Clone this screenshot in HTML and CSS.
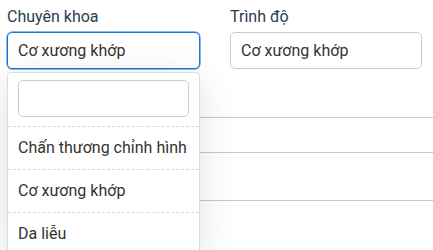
FILE: index.html
```html
<!DOCTYPE html>
<html lang="vi">
<head>
<meta charset="utf-8">
<link rel="stylesheet" href="styles.css">
</head>
<body>
<div class="page">
  <div class="form">
    <div class="field">
      <label class="label">Chuyên khoa</label>
      <div class="input focused">Cơ xương khớp</div>
      <div class="dropdown">
        <div class="search"><div class="search-input"></div></div>
        <ul class="options">
          <li class="option">Chấn thương chỉnh hình</li>
          <li class="option">Cơ xương khớp</li>
          <li class="option">Da liễu</li>
        </ul>
      </div>
    </div>
    <div class="field">
      <label class="label">Trình độ</label>
      <div class="input">Cơ xương khớp</div>
    </div>
  </div>
  <div class="rows">
    <div class="row r1"></div>
    <div class="row r2"></div>
    <div class="row r3"></div>
  </div>
</div>
</body>
</html>
```
FILE: styles.css
```css
* { box-sizing: border-box; }
html, body { margin: 0; padding: 0; background: #fff; }
body {
  font-family: Roboto, "Noto Sans", Arial, sans-serif;
  width: 433px;
  height: 250px;
  overflow: hidden;
}
.page { padding: 7px 0 0 7px; height: 250px; overflow: hidden; }
.form {
  display: grid;
  grid-template-columns: 193px 192px;
  column-gap: 30px;
}
.field { position: relative; }
.label {
  display: block;
  font-size: 16px;
  line-height: 20px;
  color: #2a3c4e;
  margin-bottom: 5px;
}
.input {
  height: 37px;
  border: 1px solid #cccccc;
  border-radius: 5px;
  padding: 0 10px;
  font-size: 16px;
  line-height: 35px;
  color: #333;
}
.input.focused {
  border-color: #1976d2;
  box-shadow: 0 0 0 0.5px #1976d2;
}
.dropdown {
  position: absolute;
  top: 65px;
  left: 0;
  width: 193px;
  height: 178px;
  overflow: hidden;
  background: #fff;
  border: 1px solid #dcdcdc;
  border-bottom: 0;
  border-radius: 4px 4px 0 0;
  box-shadow: 0 8px 36px rgba(0, 0, 0, 0.13);
  z-index: 2;
}
.search { padding: 7px 10px 9px 10px; }
.search-input {
  height: 37px;
  border: 1px solid #cccccc;
  border-radius: 5px;
}
.options { list-style: none; margin: 0; padding: 0; }
.option {
  border-top: 1px dashed #d9d9d9;
  height: 43px;
  padding: 0 10px;
  font-size: 16px;
  line-height: 41px;
  color: #333;
  white-space: nowrap;
}
.rows { margin: 0; }
.row { border-top: 1px solid #c6c6c6; }
.r1 { margin-top: 48px; height: 35px; }
.r2 { height: 48px; }
.r3 { height: 40px; }
```
